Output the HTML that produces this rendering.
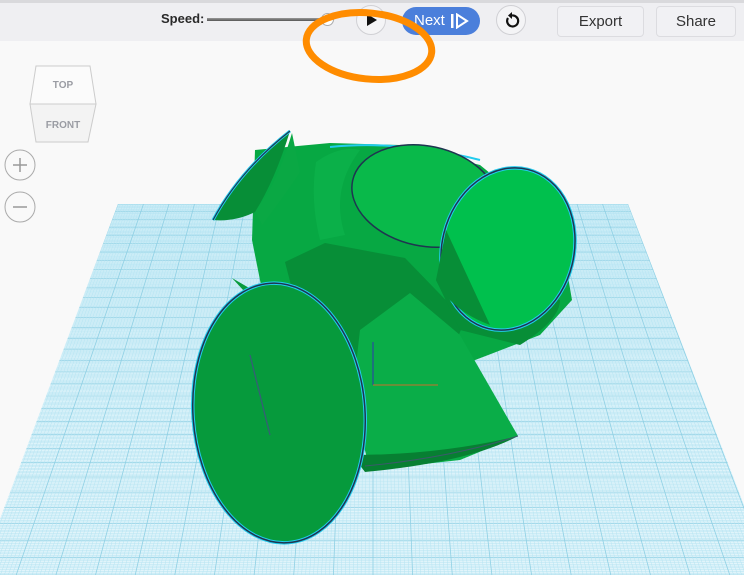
<!DOCTYPE html>
<html><head><meta charset="utf-8"><style>
html,body{margin:0;padding:0;width:744px;height:575px;overflow:hidden;background:#f9f9f9;font-family:"Liberation Sans",sans-serif}
.bar{position:absolute;left:0;top:0;width:744px;height:41px;background:#efeff2;border-top:3px solid #d9d9dc;box-sizing:border-box}
.abs{position:absolute}
.btn{position:absolute;top:6px;height:31px;border:1px solid #dcdce0;border-radius:4px;background:#f1f1f4;font-size:15px;color:#333;text-align:center;line-height:30px;box-sizing:border-box}
.circ{position:absolute;width:30px;height:30px;border-radius:50%;border:1px solid #d0d0d4;background:#f4f4f6;box-sizing:border-box}
</style></head><body>
<div class="bar"></div>
<div class="abs" style="left:161px;top:11px;font-size:13px;font-weight:bold;color:#2a2a2a">Speed:</div>
<div class="abs" style="left:207px;top:18px;width:122px;height:3px;background:linear-gradient(#999,#555)"></div>
<div class="abs" style="left:321px;top:13px;width:13px;height:13px;border-radius:50%;background:#fff;border:1px solid #aaa;box-sizing:border-box"></div>
<div class="circ" style="left:356px;top:5px"><div class="abs" style="left:10px;top:8px;width:0;height:0;border-left:10px solid #111;border-top:6px solid transparent;border-bottom:6px solid transparent"></div></div>
<div class="abs" style="left:402px;top:7px;width:78px;height:28px;border-radius:14px;background:#4b7fdb;color:#fff;font-size:15px;line-height:28px;padding-left:12px;box-sizing:border-box">Next
<svg class="abs" style="left:48px;top:6px" width="20" height="16"><rect x="1" y="1" width="2.5" height="14" fill="#fff"/><path d="M7 1.5 L17 8 L7 14.5 Z" fill="none" stroke="#fff" stroke-width="2"/></svg></div>
<div class="circ" style="left:496px;top:5px"><svg class="abs" style="left:5px;top:5px" width="20" height="20"><path d="M6 7 A5.5 5.5 0 1 0 10 4.5" fill="none" stroke="#111" stroke-width="2.2"/><path d="M10 1 L10 8 L6 4.5 Z" fill="#111"/></svg></div>
<div class="btn" style="left:557px;width:87px">Export</div>
<div class="btn" style="left:656px;width:80px">Share</div>

<svg class="abs" style="left:0;top:0" width="744" height="575">
<defs><clipPath id="g"><polygon points="118,204 628,204 771,575 -21,575"/></clipPath></defs>
<polygon points="118,204 628,204 771,575 -21,575" fill="#e2f5fb"/>
<g clip-path="url(#g)" id="grid" stroke="#b5e4f2" stroke-width="0.5"></g>
<!-- view cube -->
<path d="M36 66 L90 66 L96 104 L30 104 Z" fill="#fbfbfb" stroke="#ccc"/>
<path d="M30 104 L96 104 L88 142 L36 142 Z" fill="#f3f3f3" stroke="#ccc"/>
<text x="63" y="88" font-size="10" font-weight="bold" fill="#9a9ca3" text-anchor="middle" font-family="Liberation Sans">TOP</text>
<text x="63" y="128" font-size="10" font-weight="bold" fill="#9a9ca3" text-anchor="middle" font-family="Liberation Sans">FRONT</text>
<circle cx="20" cy="165" r="15" fill="none" stroke="#aaa"/><path d="M13 165 H27 M20 158 V172" stroke="#999" stroke-width="1.5"/>
<circle cx="20" cy="207" r="15" fill="none" stroke="#aaa"/><path d="M13 207 H27" stroke="#999" stroke-width="1.5"/>
<!-- object -->
<g stroke-linejoin="round">
<polygon points="255,150 330,143 400,145 480,165 560,230 572,300 540,335 470,362 440,345 370,345 262,290 252,240" fill="#07a843"/>
<path d="M330,147 Q400,140 480,160" fill="none" stroke="#22ccee" stroke-width="2"/>
<polygon points="232,278 270,300 350,330 340,360 280,330" fill="#089a3c"/>
<polygon points="285,262 325,243 405,258 465,320 440,380 362,400 300,320" fill="#078e37"/>
<polygon points="360,330 410,293 460,335 518,436 460,460 370,470 352,400" fill="#0aad48"/>
<path d="M352,455 Q440,455 518,436 Q470,462 365,472Z" fill="#077f32"/>
<path d="M365,466 Q450,458 518,436" fill="none" stroke="#3a5a6a" stroke-width="1"/>
<ellipse cx="425" cy="196" rx="74" ry="50" transform="rotate(12 425 196)" fill="#09b94a" stroke="#1f3550" stroke-width="1.5"/>
<path d="M316,162 Q340,145 360,150 Q330,190 345,235 L320,240 Q310,200 316,162Z" fill="#0bb049"/>
<path d="M255,210 Q275,190 292,133 L300,172 Q285,195 262,225 Z" fill="#0aa844"/>
<path d="M213,220 Q240,170 290,131 Q275,180 255,212 Q235,222 213,220Z" fill="#078e37"/>
<path d="M213,220 Q240,170 290,131" fill="none" stroke="#22ccee" stroke-width="3"/>
<path d="M213,220 Q240,170 290,131" fill="none" stroke="#1f3550" stroke-width="1.2"/>
<path d="M436,280 L460,330 L520,345 Q560,320 560,300" fill="#078e37"/>
<ellipse cx="508" cy="249" rx="66" ry="82" transform="rotate(14 508 249)" fill="#00c04d" stroke="#22ccee" stroke-width="3.5"/>
<ellipse cx="508" cy="249" rx="66" ry="82" transform="rotate(14 508 249)" fill="none" stroke="#1f3550" stroke-width="1.5"/>
<path d="M446,230 L436,280 Q450,310 490,325" fill="#078e37" stroke="none"/>
<ellipse cx="279" cy="413" rx="86" ry="130" transform="rotate(-4 279 413)" fill="#069a3c" stroke="#22ccee" stroke-width="3.5"/>
<ellipse cx="279" cy="413" rx="86" ry="130" transform="rotate(-4 279 413)" fill="none" stroke="#1f3550" stroke-width="1.5"/>
<path d="M250,355 L270,435" stroke="#3a5a7a" stroke-width="1.2"/>
<path d="M373,342 V385" stroke="#2a4aa0" stroke-width="1.2"/>
<path d="M373,385 H438" stroke="#c9702a" stroke-width="1"/>
</g>
<ellipse cx="369" cy="46" rx="63" ry="33" transform="rotate(6 369 46)" fill="none" stroke="#ff8c00" stroke-width="7"/>
</svg>
<script>
var g=document.getElementById('grid'),s='';
var vx=373,vy=-465;
for(var i=0;i<=320;i++){var t=i/320;var z=1/(1/(204-vy)+t*(1/(575-vy)-1/(204-vy)));var y=vy+z;
var w=(i%10==0)?'stroke="#8fd0e4" stroke-width="0.8"':'';s+='<line x1="-30" x2="780" y1="'+y.toFixed(1)+'" y2="'+y.toFixed(1)+'" '+w+'/>';}
for(var j=-60;j<=260;j++){var xt=118+j*2.55;var xb=vx+(xt-vx)*(575-vy)/(204-vy);
var w=(j%10==0)?'stroke="#8fd0e4" stroke-width="0.8"':'';s+='<line x1="'+xt.toFixed(1)+'" y1="204" x2="'+xb.toFixed(1)+'" y2="575" '+w+'/>';}
g.innerHTML=s;
</script>
</body></html>
